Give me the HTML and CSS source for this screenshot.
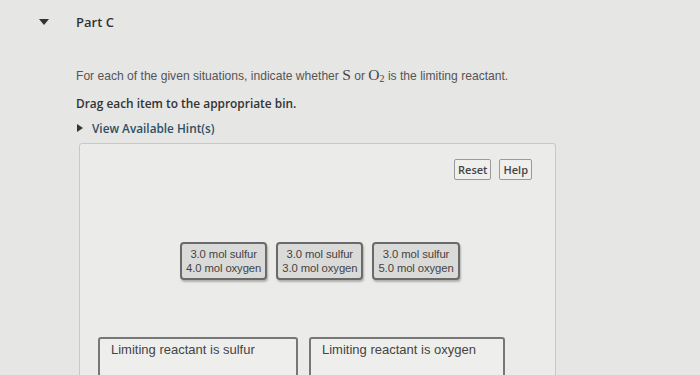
FILE: index.html
```html
<!DOCTYPE html>
<html>
<head>
<meta charset="utf-8">
<link rel="stylesheet" href="styles.css">
</head>
<body>
<div class="page">
  <div class="part-head">
    <span class="caret-down"></span>
    <span class="part-title">Part C</span>
  </div>
  <div class="content">
    <p class="question">For each of the given situations, indicate whether <span class="chem">S</span> or <span class="chem">O<sub>2</sub></span> is the limiting reactant.</p>
    <p class="instr">Drag each item to the appropriate bin.</p>
    <div class="hint"><span class="caret-right"></span><span class="hint-text">View Available Hint(s)</span></div>
    <div class="workspace">
      <div class="toolbar">
        <span class="btn">Reset</span>
        <span class="btn">Help</span>
      </div>
      <div class="items">
        <div class="item">3.0 mol sulfur<br>4.0 mol oxygen</div>
        <div class="item">3.0 mol sulfur<br>3.0 mol oxygen</div>
        <div class="item">3.0 mol sulfur<br>5.0 mol oxygen</div>
      </div>
      <div class="bins">
        <div class="bin">Limiting reactant is sulfur</div>
        <div class="bin">Limiting reactant is oxygen</div>
      </div>
    </div>
  </div>
</div>
</body>
</html>
```
FILE: styles.css
```css
html, body {
  margin: 0;
  padding: 0;
  background: #e6e6e4;
  width: 700px;
  height: 375px;
  overflow: hidden;
}
.page {
  font-family: "Liberation Sans", Arial, sans-serif;
  color: #555;
}
.part-head {
  display: flex;
  align-items: center;
  padding: 14px 0 0 39px;
  height: 16px;
}
.caret-down {
  width: 0;
  height: 0;
  border-left: 5px solid transparent;
  border-right: 5px solid transparent;
  border-top: 6px solid #333;
  margin-right: 27px;
}
.part-title {
  font-family: "Open Sans", sans-serif;
  font-weight: 600;
  font-size: 13px;
  color: #333;
}
.content {
  padding-left: 76px;
}
.question {
  margin: 37px 0 0 0;
  font-size: 12.1px;
  color: #555;
  line-height: 16px;
}
.chem {
  font-family: "Liberation Serif", serif;
  font-size: 15.5px;
  color: #444;
}
.chem sub {
  font-size: 10px;
  vertical-align: -2px;
  line-height: 0;
}
.instr {
  margin: 11px 0 0 0;
  font-family: "Open Sans", sans-serif;
  font-weight: 600;
  font-size: 11.9px;
  color: #333;
  line-height: 16px;
}
.hint {
  display: flex;
  align-items: center;
  margin-top: 9px;
  height: 16px;
}
.caret-right {
  width: 0;
  height: 0;
  border-top: 4.5px solid transparent;
  border-bottom: 4.5px solid transparent;
  border-left: 6px solid #333;
  margin: 0 9px 0 1px;
}
.hint-text {
  font-family: "Open Sans", sans-serif;
  font-weight: 600;
  font-size: 11.8px;
  color: #2f4f66;
}
.workspace {
  margin: 7px 0 0 3px;
  width: 475px;
  height: 260px;
  border: 1px solid #c8c8c6;
  border-radius: 3px;
  background: #ebebe9;
  display: flex;
  flex-direction: column;
}
.toolbar {
  display: flex;
  justify-content: flex-end;
  gap: 8px;
  padding: 15px 23px 0 0;
}
.btn {
  font-family: "Open Sans", sans-serif;
  font-weight: 600;
  font-size: 11px;
  color: #444;
  border: 1px solid #9a9a9a;
  border-radius: 2px;
  background: #efefed;
  padding: 2px 3px;
  line-height: 15px;
}
.items {
  display: flex;
  gap: 9px;
  padding: 62px 0 0 100px;
}
.item {
  font-size: 11.3px;
  line-height: 14px;
  color: #444;
  text-align: center;
  background: #dadad8;
  border: 2px solid #6a6a6a;
  border-radius: 4px;
  padding: 3px 4px 3px;
  box-shadow: 1px 2px 2px rgba(0,0,0,0.25);
  letter-spacing: -0.1px;
}
.bins {
  display: flex;
  gap: 11px;
  padding: 57px 0 0 18px;
}
.bin {
  box-sizing: border-box;
  width: 200px;
  height: 60px;
  border: 2px solid #777;
  border-radius: 3px;
  background: #eeeeec;
  padding: 3px 11px;
  font-size: 13px;
  color: #444;
}
.bin + .bin {
  width: 196px;
}
```
